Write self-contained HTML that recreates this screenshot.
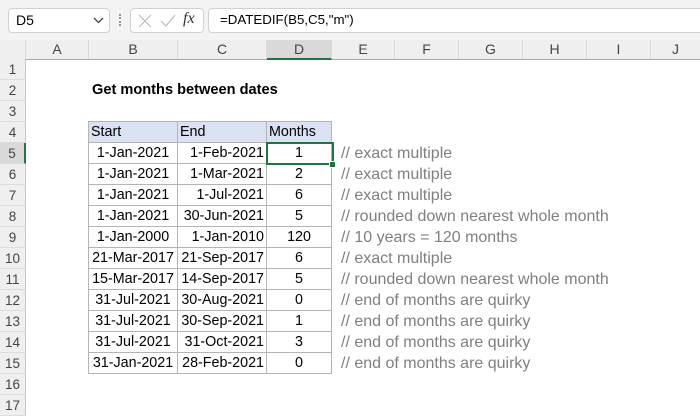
<!DOCTYPE html>
<html><head><style>
body{margin:0;width:700px;height:400px;overflow:hidden;background:#fff;font-family:"Liberation Sans",sans-serif;position:relative}
.tb{position:absolute;left:0;top:0;width:700px;height:40px;background:#f3f3f3;border-bottom:1px solid #d4d4d4}
.box{position:absolute;background:#fff;border:1px solid #d0d0d0;border-radius:4px;top:8px;height:23px}
.hdr{position:absolute;top:40px;height:19px;background:#efefef;border-bottom:1px solid #a8a8a8;width:700px}
.ch{position:absolute;top:0;height:19px;line-height:19px;text-align:center;font-size:14px;color:#444;border-right:1px solid #d8d8d8}
.rh{position:absolute;left:0;width:26px;background:#efefef;border-right:1px solid #c8c8c8;text-align:center;font-size:13.5px;color:#444;height:21px;line-height:21px;box-sizing:border-box;border-bottom:1px solid #ddd}
.c{position:absolute;height:21px;line-height:21px;font-size:14.3px;box-sizing:border-box;white-space:nowrap;color:#000}
.t{border:1px solid #b4b4b4;margin-left:-1px;margin-top:-1px;height:22px}
.cm{color:#7f7f7f;left:341px;font-size:16px}
</style></head><body>
<div class="tb">
<div class="box" style="left:8px;width:100px"><span style="position:absolute;left:7px;top:3px;font-size:14px">D5</span>
<svg style="position:absolute;left:84px;top:8px" width="11" height="7"><path d="M1 1L5.5 5.5L10 1" stroke="#444" fill="none" stroke-width="1.3"/></svg></div>
<div style="position:absolute;left:119px;top:14px;width:2px;height:12px;border-left:2px dotted #999"></div>
<div class="box" style="left:130px;width:72px">
<svg style="position:absolute;left:7px;top:5px" width="14" height="14"><path d="M1 1L13 13M13 1L1 13" stroke="#bbb" stroke-width="1.2"/></svg>
<svg style="position:absolute;left:29px;top:5px" width="16" height="14"><path d="M1 7L6 12L15 1" stroke="#bbb" fill="none" stroke-width="1.2"/></svg>
<span style="position:absolute;left:52px;top:1px;font-family:'Liberation Serif',serif;font-style:italic;font-size:16px;color:#333">fx</span></div>
<div class="box" style="left:208px;width:500px"><span style="position:absolute;left:11px;top:3px;font-size:13.3px">=DATEDIF(B5,C5,"m")</span></div>
</div>
<div class="hdr">
<div class="ch" style="left:0;width:25px"></div>
<div class="ch" style="left:26px;width:62px">A</div>
<div class="ch" style="left:89px;width:88px">B</div>
<div class="ch" style="left:178px;width:88px">C</div>
<div class="ch" style="left:267px;width:64px;background:#d9d9d9;border-bottom:2px solid #217346;height:18px">D</div>
<div class="ch" style="left:332px;width:62px">E</div>
<div class="ch" style="left:395px;width:63px">F</div>
<div class="ch" style="left:459px;width:63px">G</div>
<div class="ch" style="left:523px;width:63px">H</div>
<div class="ch" style="left:587px;width:63px">I</div>
<div class="ch" style="left:651px;width:49px">J</div>
</div>
<div id="g"></div>
<script>
var rows=[["1-Jan-2021","1-Feb-2021","1","// exact multiple"],["1-Jan-2021","1-Mar-2021","2","// exact multiple"],["1-Jan-2021","1-Jul-2021","6","// exact multiple"],["1-Jan-2021","30-Jun-2021","5","// rounded down nearest whole month"],["1-Jan-2000","1-Jan-2010","120","// 10 years = 120 months"],["21-Mar-2017","21-Sep-2017","6","// exact multiple"],["15-Mar-2017","14-Sep-2017","5","// rounded down nearest whole month"],["31-Jul-2021","30-Aug-2021","0","// end of months are quirky"],["31-Jul-2021","30-Sep-2021","1","// end of months are quirky"],["31-Jul-2021","31-Oct-2021","3","// end of months are quirky"],["31-Jan-2021","28-Feb-2021","0","// end of months are quirky"]];
var h="";
for(var n=1;n<=17;n++){var y=59+(n-1)*21;h+='<div class="rh" style="top:'+y+'px;'+(n==5?'background:#d9d9d9;border-right:2px solid #217346;':'')+'">'+n+'</div>';}
h+='<div class="c" style="left:92px;top:80px;font-weight:bold;font-size:14.6px">Get months between dates</div>';
var y4=59+63;
h+='<div class="c t" style="left:89px;top:'+y4+'px;width:90px;background:#d9e1f2;padding-left:2px">Start</div>';
h+='<div class="c t" style="left:178px;top:'+y4+'px;width:90px;background:#d9e1f2;padding-left:2px">End</div>';
h+='<div class="c t" style="left:267px;top:'+y4+'px;width:66px;background:#d9e1f2;padding-left:2px">Months</div>';
for(var i=0;i<rows.length;i++){var y=y4+21*(i+1),r=rows[i];
h+='<div class="c t" style="left:89px;top:'+y+'px;width:90px;text-align:center">'+r[0]+'</div>';
h+='<div class="c t" style="left:178px;top:'+y+'px;width:90px;text-align:right;padding-right:2px">'+r[1]+'</div>';
h+='<div class="c t" style="left:267px;top:'+y+'px;width:66px;text-align:center">'+r[2]+'</div>';
h+='<div class="c cm" style="top:'+y+'px">'+r[3]+'</div>';}
h+='<div style="position:absolute;left:266px;top:'+(y4+20)+'px;width:64px;height:19px;border:2px solid #217346"></div>';
h+='<div style="position:absolute;left:329px;top:'+(y4+39)+'px;width:5px;height:5px;background:#217346;border:1px solid #fff"></div>';
document.getElementById("g").innerHTML=h;
</script>
</body></html>
